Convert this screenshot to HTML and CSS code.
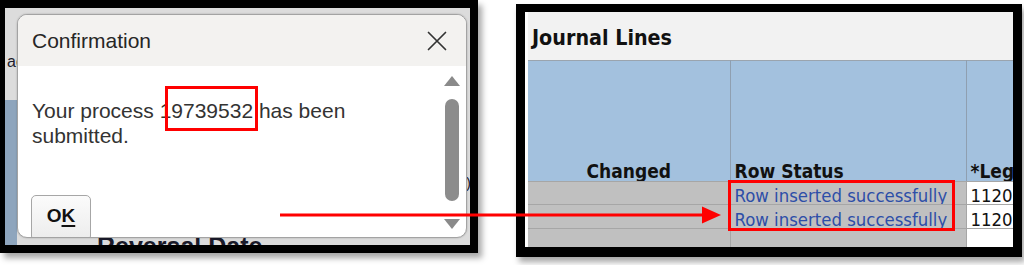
FILE: index.html
```html
<!DOCTYPE html>
<html lang="en">
<head>
<meta charset="utf-8">
<title>Confirmation and Journal Lines</title>
<link rel="stylesheet" href="styles.css">
</head>
<body>
<div class="stage">
  <section class="lpanel">
    <div class="linner">
      <div class="bgpage">
        <div class="bg-frag">ac</div>
        <div class="bg-side">)</div>
        <div class="bg-reversal">Reversal Date</div>
      </div>
      <div class="dialog">
        <div class="dlg-head">
          <span class="dlg-title">Confirmation</span>
          <svg class="close" width="20" height="20" viewBox="0 0 20 20" aria-label="Close">
            <path d="M1.5 1.5 L18.5 18.5 M18.5 1.5 L1.5 18.5" stroke="#333" stroke-width="1.7" fill="none" stroke-linecap="round"/>
          </svg>
        </div>
        <div class="dlg-body">
          <div class="dlg-content">
            <p class="msg">Your process 1<span class="hl">9739532</span> has been submitted.</p>
            <button class="ok" type="button">O<u>K</u></button>
          </div>
          <div class="vscroll">
            <span class="arr-up"></span>
            <span class="thumb"></span>
            <span class="arr-down"></span>
          </div>
        </div>
      </div>
    </div>
  </section>

  <section class="rpanel">
    <div class="rinner">
      <div class="rhead">Journal Lines</div>
      <table class="jl">
        <colgroup><col class="c1"><col class="c2"><col class="c3"></colgroup>
        <thead>
          <tr><th class="th-center">Changed</th><th>Row Status</th><th>*Legal Entity</th></tr>
        </thead>
        <tbody>
          <tr class="r1"><td></td><td><a href="#">Row inserted successfully</a></td><td class="val">11206</td></tr>
          <tr class="r2"><td></td><td><a href="#">Row inserted successfully</a></td><td class="val">11206</td></tr>
          <tr class="r3"><td></td><td></td><td class="val"></td></tr>
        </tbody>
      </table>
      <div class="annot"></div>
    </div>
  </section>

  <svg class="arrow" width="1024" height="265" viewBox="0 0 1024 265">
    <line x1="280" y1="215" x2="705" y2="215" stroke="#ff0000" stroke-width="3.2"/>
    <polygon points="702,206.5 721,215 702,223.5" fill="#ff0000"/>
  </svg>
</div>
</body>
</html>
```

FILE: styles.css
```css
* { box-sizing: border-box; }

html, body {
  margin: 0;
  padding: 0;
  background: #ffffff;
}

.stage {
  position: relative;
  width: 1024px;
  height: 265px;
  overflow: hidden;
  display: flex;
  align-items: flex-start;
  background: #ffffff;
}

/* ---------- left panel ---------- */
.lpanel {
  width: 478px;
  height: 253px;
  border-style: solid;
  border-color: #000;
  border-width: 8px 8px 8px 5px;
  box-shadow: 4px 5px 6px rgba(0, 0, 0, 0.35);
  flex: none;
}

.linner {
  width: 100%;
  height: 100%;
  display: grid;
  overflow: hidden;
}

.bgpage,
.dialog {
  grid-area: 1 / 1;
}

.bgpage {
  display: flex;
  flex-direction: column;
  background:
    linear-gradient(#8ea5bd, #8ea5bd) 0 92px / 12px 100% no-repeat,
    #dcdcdc;
  font-family: "Liberation Sans", Arial, sans-serif;
  color: #1c1c2c;
}

.bg-frag {
  margin-top: 45px;
  padding-left: 2px;
  font-size: 16px;
  line-height: 18px;
}

.bg-side {
  align-self: flex-end;
  margin-top: 104px;
  width: 4px;
  overflow: hidden;
  font-size: 15px;
  line-height: 16px;
}

.bg-reversal {
  margin-top: auto;
  margin-bottom: -14px;
  padding-left: 92px;
  height: 25px;
  font-size: 25px;
  line-height: 25px;
  font-weight: bold;
  color: #1a1a2a;
}

.dialog {
  align-self: start;
  justify-self: start;
  margin: 6px 0 0 12px;
  width: 450px;
  height: 224px;
  background: #ffffff;
  border: 1px solid #a3a3a3;
  border-radius: 10px;
  overflow: hidden;
  display: flex;
  flex-direction: column;
  box-shadow: 0 0 2px rgba(0, 0, 0, 0.25);
  font-family: "Liberation Sans", Arial, sans-serif;
}

.dlg-head {
  height: 51px;
  flex: none;
  background: #f3f2f0;
  display: flex;
  align-items: center;
  justify-content: space-between;
  padding: 0 19px 0 14px;
}

.dlg-title {
  font-size: 21px;
  color: #262626;
  margin-top: 1px;
}

.close {
  display: block;
  margin-top: 1px;
}

.dlg-body {
  flex: 1;
  display: flex;
  overflow: hidden;
}

.dlg-content {
  flex: 1;
  padding: 32px 0 0 14px;
  display: flex;
  flex-direction: column;
  align-items: flex-start;
}

.msg {
  margin: 0;
  font-size: 21px;
  line-height: 25px;
  color: #333333;
  width: 400px;
}

.hl {
  position: relative;
}

.hl::after {
  content: "";
  position: absolute;
  left: -6px;
  right: -5px;
  top: -13px;
  bottom: -9px;
  border: 3px solid #ff0000;
}

.ok {
  margin: 47px 0 0 -1px;
  width: 60px;
  height: 46px;
  flex: none;
  padding: 0 0 4px 0;
  border: 1px solid #a6a6a6;
  border-radius: 5px;
  background: linear-gradient(#fbfbfb, #ececec);
  font-family: "Liberation Sans", Arial, sans-serif;
  font-weight: bold;
  font-size: 19px;
  color: #111;
  display: flex;
  align-items: center;
  justify-content: center;
}

.ok u {
  text-decoration-thickness: 2px;
  text-underline-offset: 3px;
}

.vscroll {
  width: 18px;
  margin-right: 5px;
  flex: none;
  display: flex;
  flex-direction: column;
  align-items: center;
  padding-top: 10px;
}

.arr-up,
.arr-down {
  display: block;
  width: 0;
  height: 0;
  border-left: 8px solid transparent;
  border-right: 8px solid transparent;
}

.arr-up {
  border-bottom: 10px solid #8a8a8a;
}

.arr-down {
  margin-top: 18px;
  border-top: 10px solid #8a8a8a;
}

.thumb {
  display: block;
  margin-top: 13px;
  width: 14px;
  height: 102px;
  border-radius: 7px;
  background: #8c8c8c;
}

/* ---------- right panel ---------- */
.rpanel {
  margin: 4px 0 0 38px;
  width: 506px;
  height: 253px;
  border-style: solid;
  border-color: #000;
  border-width: 8px 9px 10px 9px;
  box-shadow: 3px 5px 6px rgba(0, 0, 0, 0.35);
  flex: none;
}

.rinner {
  position: relative;
  width: 100%;
  height: 100%;
  background: #ffffff;
  padding-left: 3px;
  overflow: hidden;
  font-family: "DejaVu Sans Condensed", "DejaVu Sans", Tahoma, sans-serif;
  font-stretch: condensed;
}

.rhead {
  height: 48px;
  background: #f2f2f2;
  padding: 4px 0 0 4px;
  font-size: 21.3px;
  line-height: 44px;
  font-weight: bold;
  color: #111;
  white-space: nowrap;
}

.jl {
  border-collapse: collapse;
  table-layout: fixed;
  width: 485px;
}

.c1 { width: 202px; }
.c2 { width: 236px; }
.c3 { width: 47px; }

.jl th {
  height: 121px;
  background: #a3c1de;
  border-top: 1px solid #9aa4ae;
  border-left: 1px solid #8f9fb0;
  border-right: 1px solid #8f9fb0;
  border-bottom: 1px solid #a6a6a6;
  vertical-align: bottom;
  text-align: left;
  padding: 0 0 0 4px;
  font-size: 19px;
  line-height: 20px;
  font-weight: bold;
  color: #111;
  white-space: nowrap;
  overflow: hidden;
}

.jl th:first-child { border-left: none; }
.jl th:last-child { border-right: none; }

.jl th.th-center {
  text-align: center;
  padding-left: 0;
}

.jl td {
  background: #c0c0c0;
  border: 1px solid #a6a6a6;
  padding: 0 0 0 4px;
  vertical-align: bottom;
  font-size: 18.4px;
  line-height: 17px;
  white-space: nowrap;
  overflow: hidden;
}

.jl td:first-child { border-left: none; }
.jl td:last-child { border-right: none; }

.jl tr.r1 td { height: 23px; }
.jl tr.r2 td { height: 24px; }
.jl tr.r3 td { height: 19px; border-bottom: none; }

.jl td.val {
  background: #ffffff;
  color: #111;
}

.jl a {
  color: #2d4ea8;
  text-decoration: underline;
  text-underline-offset: 2px;
}

.annot {
  position: absolute;
  left: 203px;
  top: 168px;
  width: 227px;
  height: 51px;
  border: 3px solid #ff0000;
}

/* ---------- connecting arrow ---------- */
.arrow {
  position: absolute;
  left: 0;
  top: 0;
  pointer-events: none;
}
```
